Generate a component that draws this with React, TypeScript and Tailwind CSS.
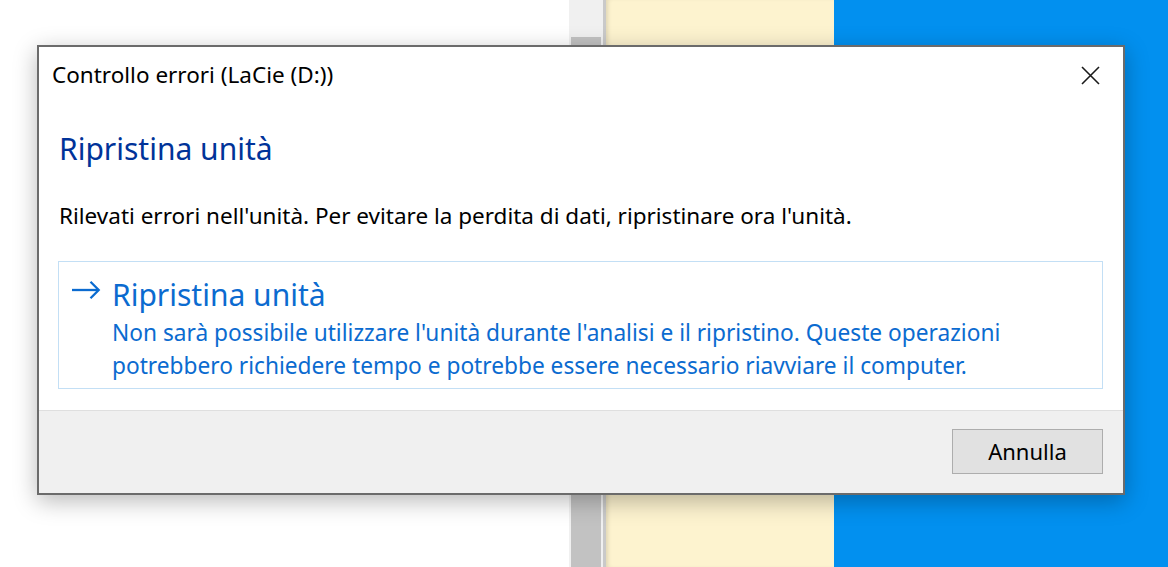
const font = { fontFamily: '"Segoe UI", "Noto Sans", "Open Sans", sans-serif' };

function ArrowIcon() {
  return (
    <svg width="30" height="20" viewBox="0 0 30 20" fill="none" stroke="#0b6bd0" strokeWidth="2.3">
      <path d="M1 10 H27.5" />
      <path d="M19.5 1.8 L27.7 10 L19.5 18.2" />
    </svg>
  );
}

function CloseIcon() {
  return (
    <svg width="19" height="19" viewBox="0 0 19 19" fill="none" stroke="#1a1a1a" strokeWidth="1.6">
      <path d="M1 1 L18 18 M18 1 L1 18" />
    </svg>
  );
}

export default function App() {
  return (
    <div className="relative w-[1168px] h-[567px] overflow-hidden flex" style={font}>
      {/* desktop behind the dialog */}
      <div className="w-[569px] h-full bg-white" />
      <div className="w-[34px] h-full bg-[#f0f0f0] flex flex-col pt-[37px] px-[2px]">
        <div className="flex-1 bg-[#c2c2c2]" />
      </div>
      <div className="w-[3px] h-full bg-[#c9c9c9]" />
      <div className="w-[228px] h-full bg-[#fdf3cf] shadow-[inset_4px_0_4px_-2px_rgba(0,0,0,0.12)]" />
      <div className="flex-1 h-full bg-[#0290ef]" />

      {/* dialog window */}
      <div className="absolute left-[37px] top-[45px] w-[1088px] h-[450px] border-2 border-[rgba(0,0,0,0.58)] bg-white flex flex-col shadow-[0_6px_22px_rgba(0,0,0,0.28)]">
        <div className="h-[56px] shrink-0 flex items-center justify-between pl-[13px] pr-[23px]">
          <span className="text-[22.5px] leading-[28px] text-black">Controllo errori (LaCie (D:))</span>
          <CloseIcon />
        </div>

        <div className="px-[20px]">
          <div className="pt-[28px] text-[30px] leading-[36px] text-[#003399]">Ripristina unità</div>
          <div className="mt-[35px] text-[22.5px] leading-[28px] text-black">
            Rilevati errori nell'unità. Per evitare la perdita di dati, ripristinare ora l'unità.
          </div>

          <div className="mt-[31px] -ml-px h-[128px] border border-[#c3dff5] flex pl-[12px] pt-[15px]">
            <div className="pt-[3px] w-[41px] shrink-0">
              <ArrowIcon />
            </div>
            <div className="text-[#0b6bd0]">
              <div className="text-[30px] leading-[36px]">Ripristina unità</div>
              <div className="mt-[3px] text-[22.7px] leading-[33px]">
                Non sarà possibile utilizzare l'unità durante l'analisi e il ripristino. Queste operazioni
                <br />
                potrebbero richiedere tempo e potrebbe essere necessario riavviare il computer.
              </div>
            </div>
          </div>
        </div>

        <div className="mt-[21px] flex-1 bg-[#f0f0f0] border-t border-[#dfdfdf] flex justify-end items-start pt-[18px] pr-[20px]">
          <button className="w-[151px] h-[45px] bg-[#e1e1e1] border border-[#adadad] text-[22px] text-black">
            Annulla
          </button>
        </div>
      </div>
    </div>
  );
}
